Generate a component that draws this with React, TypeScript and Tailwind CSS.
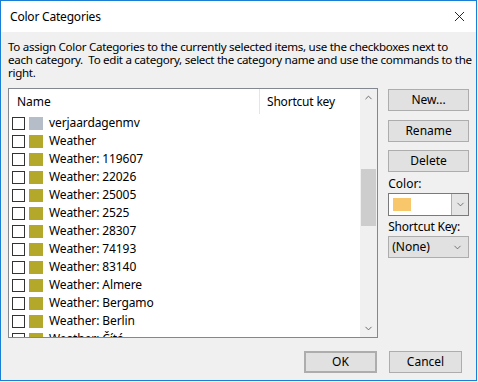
import { ChevronDown, ChevronUp, X } from 'lucide-react'

const rows = [
  { name: 'verjaardagenmv', color: 'bg-[#b5bdc9]' },
  { name: 'Weather', color: 'bg-[#b3a829]' },
  { name: 'Weather: 119607', color: 'bg-[#b3a829]' },
  { name: 'Weather: 22026', color: 'bg-[#b3a829]' },
  { name: 'Weather: 25005', color: 'bg-[#b3a829]' },
  { name: 'Weather: 2525', color: 'bg-[#b3a829]' },
  { name: 'Weather: 28307', color: 'bg-[#b3a829]' },
  { name: 'Weather: 74193', color: 'bg-[#b3a829]' },
  { name: 'Weather: 83140', color: 'bg-[#b3a829]' },
  { name: 'Weather: Almere', color: 'bg-[#b3a829]' },
  { name: 'Weather: Bergamo', color: 'bg-[#b3a829]' },
  { name: 'Weather: Berlin', color: 'bg-[#b3a829]' },
  { name: 'Weather: Čítá', color: 'bg-[#b3a829]' },
]

function Button({ label, className = '' }: { label: string; className?: string }) {
  return (
    <button className={`flex h-[22px] items-center justify-center border border-[#adadad] bg-[#e1e1e1] text-[12px] text-black ${className}`}>
      {label}
    </button>
  )
}

export default function App() {
  return (
    <div
      className="h-[382px] w-[478px] overflow-hidden bg-[#f0f0f0] text-black"
      style={{ fontFamily: '"Noto Sans", "Open Sans", sans-serif' }}
    >
      <div className="flex h-[381px] w-[477px] flex-col border border-[#1a7fd4]">
        {/* Title bar */}
        <div className="flex h-[31px] shrink-0 items-center justify-between bg-white pl-[9px] pr-[8px]">
          <span className="text-[12px] tracking-[-0.2px]">Color Categories</span>
          <X size={17} strokeWidth={1.2} className="text-black" />
        </div>

        {/* Body */}
        <div className="flex flex-1 flex-col bg-[#f0f0f0] px-[7px]">
          <p className="mt-[8px] mr-[-6px] text-[11.6px] leading-[13px] tracking-[-0.3px]">
            To assign Color Categories to the currently selected items, use the checkboxes next to each category.&nbsp; To edit a category, select the category name and use the commands to the right.
          </p>

          <div className="mt-[9px] flex">
            {/* List */}
            <div className="flex h-[250px] w-[371px] border border-[#828790] bg-white">
              <div className="flex flex-1 flex-col overflow-hidden">
                <div className="flex h-[25px] shrink-0 items-center text-[12px]">
                  <div className="w-[250px] pl-[8px]">Name</div>
                  <div className="h-full w-px bg-[#e5e5e5]" />
                  <div className="pl-[7px] tracking-[-0.2px]">Shortcut key</div>
                </div>
                {rows.map((r) => (
                  <div key={r.name} className="flex h-[18px] shrink-0 items-center pl-[3px] text-[12px]">
                    <span className="h-[13px] w-[13px] border border-[#333] bg-white" />
                    <span className={`ml-[4px] h-[13px] w-[14px] ${r.color}`} />
                    <span className="ml-[6px] tracking-[-0.1px]">{r.name}</span>
                  </div>
                ))}
              </div>
              {/* Scrollbar */}
              <div className="flex w-[17px] flex-col bg-[#f0f0f0]">
                <div className="flex h-[17px] items-center justify-center">
                  <ChevronUp size={11} strokeWidth={2} className="text-[#606060]" />
                </div>
                <div className="mt-[63px] mx-[1px] h-[57px] bg-[#cdcdcd]" />
                <div className="flex-1" />
                <div className="flex h-[17px] items-center justify-center">
                  <ChevronDown size={11} strokeWidth={2} className="text-[#606060]" />
                </div>
              </div>
            </div>

            {/* Right column */}
            <div className="ml-[10px] flex w-[81px] flex-col">
              <Button label="New..." className="mt-[1px]" />
              <Button label="Rename" className="mt-[9px]" />
              <Button label="Delete" className="mt-[8px]" />
              <div className="mt-[4px] text-[12px] leading-[15px]">Color:</div>
              <div className="mt-[2px] flex h-[23px] border border-[#7a7a7a] bg-white">
                <div className="flex flex-1 items-center pl-[4px]">
                  <span className="h-[13px] w-[18px] bg-[#f8c76b]" />
                </div>
                <div className="flex w-[17px] items-center justify-center border-l border-[#adadad] bg-[#e5e5e5]">
                  <ChevronDown size={11} strokeWidth={1.5} className="text-[#444]" />
                </div>
              </div>
              <div className="mt-[3px] text-[12px] leading-[15px] tracking-[-0.2px]">Shortcut Key:</div>
              <div className="mt-[2px] flex h-[22px] items-center justify-between border border-[#adadad] bg-[#e1e1e1] pl-[3px] pr-[5px] text-[12px]">
                <span>(None)</span>
                <ChevronDown size={11} strokeWidth={1.5} className="text-[#444]" />
              </div>
            </div>
          </div>

          {/* Footer */}
          <div className="mt-[13px] flex justify-end gap-[12px] pr-[7px]">
            <Button label="OK" className="w-[73px] border-2 border-[#0078d7]" />
            <Button label="Cancel" className="w-[73px]" />
          </div>
        </div>
      </div>
    </div>
  )
}
